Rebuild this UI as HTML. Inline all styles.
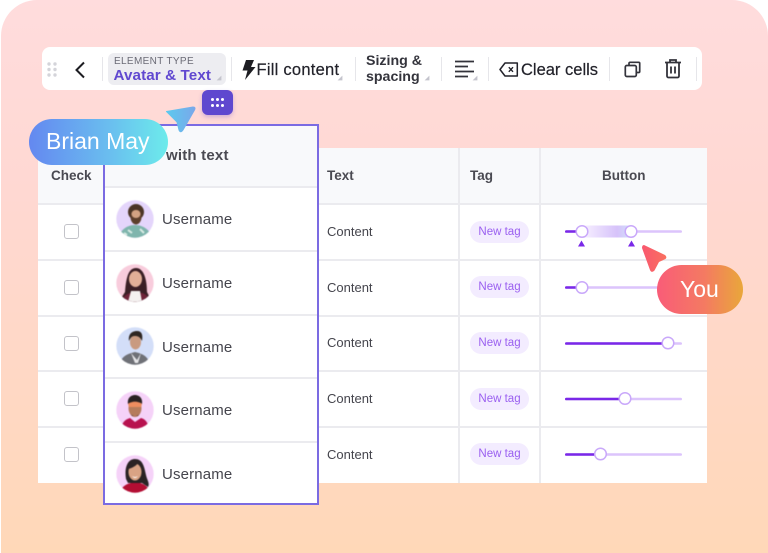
<!DOCTYPE html>
<html><head><meta charset="utf-8">
<style>
html,body{margin:0;padding:0;background:#fff;width:768px;height:553px;overflow:hidden}
#p{position:relative;width:768px;height:553px;overflow:hidden;background:#fff;font-family:"Liberation Sans",sans-serif}
#p div,#p span,#p svg{position:absolute;box-sizing:border-box}
.bg{left:1px;top:0;width:767px;height:553px;border-radius:36px 36px 0 0;background:linear-gradient(180deg,#ffdcdd 0%,#ffd8d2 35%,#ffd8b8 100%)}
.t{white-space:nowrap;line-height:1}
.hl{background:#ebebef}
.sep{width:1px;height:24px;top:57px;background:#e6e6ea}
.tri{width:0;height:0;border-left:6px solid transparent;border-bottom:6px solid #c4c4cd;transform:scale(.8)}
.u{left:162px;font-size:15px;color:#45454d;letter-spacing:.15px}
.c{left:327px;font-size:13px;color:#45454d}
.g{left:470px;width:59px;height:22px;border-radius:11px;background:#f3ecff;color:#9a5ff0;font-size:11.5px;line-height:23px;text-align:center}
.h{top:169px;font-size:13.5px;font-weight:700;color:#4a4a52}
.b{left:64px;width:15px;height:15px;border:1.5px solid #c3c3c9;border-radius:3px;background:#fff}
.av{filter:blur(.45px)}
</style></head><body>
<div id="p">
<div class="bg"></div>

<!-- Table -->
<div style="left:38px;top:148px;width:669px;height:335px;background:#fff"></div>
<div style="left:38px;top:148px;width:669px;height:56px;background:#f8f9fb"></div>
<div class="hl" style="left:38px;top:203px;width:669px;height:2px"></div>
<div class="hl" style="left:38px;top:259px;width:669px;height:2px"></div>
<div class="hl" style="left:38px;top:315px;width:669px;height:2px"></div>
<div class="hl" style="left:38px;top:370px;width:669px;height:2px"></div>
<div class="hl" style="left:38px;top:426px;width:669px;height:2px"></div>
<div class="hl" style="left:458px;top:148px;width:2px;height:335px"></div>
<div class="hl" style="left:539px;top:148px;width:2px;height:335px"></div>
<div class="t h" style="left:51px">Check</div>
<div class="t h" style="left:327px">Text</div>
<div class="t h" style="left:470px">Tag</div>
<div class="t h" style="left:602px">Button</div>

<div class="b" style="top:224px"></div>
<div class="b" style="top:280px"></div>
<div class="b" style="top:336px"></div>
<div class="b" style="top:391px"></div>
<div class="b" style="top:447px"></div>

<div class="t c" style="top:225px">Content</div>
<div class="t c" style="top:281px">Content</div>
<div class="t c" style="top:336px">Content</div>
<div class="t c" style="top:392px">Content</div>
<div class="t c" style="top:448px">Content</div>

<div class="t g" style="top:221px">New tag</div>
<div class="t g" style="top:276px">New tag</div>
<div class="t g" style="top:332px">New tag</div>
<div class="t g" style="top:388px">New tag</div>
<div class="t g" style="top:443px">New tag</div>

<!-- Sliders -->
<svg style="left:540px;top:204px" width="167" height="279" viewBox="0 0 167 279">
<defs><linearGradient id="tr" x1="0" x2="1"><stop offset="0" stop-color="#f5edff"/><stop offset=".7" stop-color="#d6c2fa"/><stop offset="1" stop-color="#cfe0fb"/></linearGradient></defs>
<g stroke-linecap="round" stroke-width="2.6">
<path d="M26.300 27.500H140.700" stroke="#dcc4fc"/><path d="M26.300 27.500H38" stroke="#7a28e8"/>
<path d="M26.300 83.500H140.700" stroke="#dcc4fc"/><path d="M26.300 83.500H40" stroke="#7a28e8"/>
<path d="M26.300 139.500H140.700" stroke="#dcc4fc"/><path d="M26.300 139.500H128" stroke="#7a28e8"/>
<path d="M26.300 195H140.700" stroke="#dcc4fc"/><path d="M26.300 195H85" stroke="#7a28e8"/>
<path d="M26.300 250.500H140.700" stroke="#dcc4fc"/><path d="M26.300 250.500H60" stroke="#7a28e8"/>
</g>
<rect x="45" y="21.500" width="46" height="12" fill="url(#tr)"/>
<g fill="#fff" stroke="#c9a8fa" stroke-width="1.500">
<circle cx="42" cy="27.500" r="5.800"/><circle cx="91" cy="27.500" r="5.800"/>
<circle cx="42" cy="83.500" r="5.800"/><circle cx="128" cy="139" r="5.800"/>
<circle cx="85" cy="194.500" r="5.800"/><circle cx="60.500" cy="250" r="5.800"/>
</g>
<path d="M41.500 36.500L45 42.500H38ZM91.500 36.500L95 42.500H88Z" fill="#7a28e8"/>
</svg>

<!-- Selected column -->
<div style="left:103px;top:124px;width:216px;height:381px;background:#fff;border:2px solid #7b6be2"></div>
<div style="left:105px;top:126px;width:212px;height:60px;background:#f8f9fb"></div>
<div class="hl" style="left:105px;top:186px;width:212px;height:2px"></div>
<div class="hl" style="left:105px;top:250px;width:212px;height:2px"></div>
<div class="hl" style="left:105px;top:314px;width:212px;height:2px"></div>
<div class="hl" style="left:105px;top:377px;width:212px;height:2px"></div>
<div class="hl" style="left:105px;top:441px;width:212px;height:2px"></div>
<div class="t" style="left:166px;top:148px;font-size:15px;font-weight:700;color:#4a4a52;letter-spacing:.2px">with text</div>
<div class="t u" style="top:212px">Username</div>
<div class="t u" style="top:276px">Username</div>
<div class="t u" style="top:340px">Username</div>
<div class="t u" style="top:403px">Username</div>
<div class="t u" style="top:467px">Username</div>

<!-- Avatars -->
<svg class="av" style="left:116px;top:200px" width="38" height="38" viewBox="0 0 38 38"><defs><clipPath id="c1"><circle cx="19" cy="19" r="18.700"/></clipPath></defs><g clip-path="url(#c1)"><rect width="38" height="38" fill="#e4d5fb"/><path d="M3 38C4 29 12 25 19 25S34 29 36 38Z" fill="#7fb5ad"/><path d="M12 30l4 3M24 29l4 4M8 33l3 2" stroke="#d9ebe4" stroke-width="2"/><circle cx="20" cy="12" r="8" fill="#4b3526"/><ellipse cx="20" cy="17" rx="5.500" ry="7.500" fill="#5d3f2c"/><ellipse cx="20" cy="14" rx="4.500" ry="4" fill="#d3a283"/></g></svg>
<svg class="av" style="left:116px;top:264px" width="38" height="38" viewBox="0 0 38 38"><defs><clipPath id="c2"><circle cx="19" cy="19" r="18.700"/></clipPath></defs><g clip-path="url(#c2)"><rect width="38" height="38" fill="#f8ccdc"/><path d="M4 36L9 28C10 15 12 4 20 4S31 16 31 28L35 36L30 38H8Z" fill="#3b1f25"/><path d="M5 38C7 32 11 30 14 29L26 29C29 30 33 32 34 38Z" fill="#6e2338"/><path d="M12 38L15 27H24L26 38Z" fill="#f4f1f0"/><ellipse cx="19.500" cy="15" rx="6.500" ry="8" fill="#e2af97"/></g></svg>
<svg class="av" style="left:116px;top:327px" width="38" height="38" viewBox="0 0 38 38"><defs><clipPath id="c3"><circle cx="19" cy="19" r="18.700"/></clipPath></defs><g clip-path="url(#c3)"><rect width="38" height="38" fill="#d3def8"/><path d="M4 38C5 29 11 27 19 25C27 27 32 29 34 38Z" fill="#6f7177"/><path d="M15 26L21 33L25 26L22 36H19Z" fill="#e6e6e8"/><ellipse cx="19.500" cy="15" rx="5.500" ry="7.500" fill="#c99a80"/><path d="M13 14C12 7 16 4 21 4S27 8 26 14C24 10 22 9 19 9S15 10 13 14Z" fill="#2e2622"/></g></svg>
<svg class="av" style="left:116px;top:391px" width="38" height="38" viewBox="0 0 38 38"><defs><clipPath id="c4"><circle cx="19" cy="19" r="18.700"/></clipPath></defs><g clip-path="url(#c4)"><rect width="38" height="38" fill="#f5d2f8"/><path d="M5 38C6 30 11 28 14 27L19 31L25 27C29 28 32 31 33 38Z" fill="#b8124f"/><ellipse cx="19" cy="17" rx="6.500" ry="9" fill="#b57c5c"/><path d="M12 13C11 7 15 4 19 4S27 7 26 13C22 10 16 10 12 13Z" fill="#2a2222"/><path d="M12 13C15 10 23 10 26 13L25 16H13Z" fill="#ee8d5f"/><path d="M14 22C16 26 22 26 24 22L22 25H16Z" fill="#3a2c28"/></g></svg>
<svg class="av" style="left:116px;top:455px" width="38" height="38" viewBox="0 0 38 38"><defs><clipPath id="c5"><circle cx="19" cy="19" r="18.700"/></clipPath></defs><g clip-path="url(#c5)"><rect width="38" height="38" fill="#f5d2f8"/><path d="M10 24C8 12 12 4 19 4S28 10 30 20C31 25 34 28 32 32L26 28H12Z" fill="#2a2324"/><path d="M4 38C5 32 10 29 15 28H24C28 29 33 32 34 38Z" fill="#b30e33"/><ellipse cx="19" cy="17" rx="6.500" ry="8.500" fill="#d9a384"/><path d="M12 14C14 8 18 8 22 8C20 11 16 13 12 14Z" fill="#2a2324"/><path d="M16 21Q19 23 22 21Q19 25 16 21Z" fill="#fff"/></g></svg>

<!-- Toolbar -->
<div style="left:42px;top:47px;width:660px;height:43px;background:#fff;border-radius:8px"></div>
<svg style="left:47px;top:62px" width="11" height="15"><g fill="#d4d4da"><circle cx="2" cy="2" r="1.700"/><circle cx="8" cy="2" r="1.700"/><circle cx="2" cy="7.500" r="1.700"/><circle cx="8" cy="7.500" r="1.700"/><circle cx="2" cy="13" r="1.700"/><circle cx="8" cy="13" r="1.700"/></g></svg>
<svg style="left:73px;top:60px" width="14" height="20"><path d="M11 2.500L3.500 10L11 17.500" fill="none" stroke="#1d1d22" stroke-width="2"/></svg>
<div class="sep" style="left:102px"></div>
<div style="left:108px;top:53px;width:118px;height:32px;background:#ededf1;border-radius:6px"></div>
<div class="t" style="left:114px;top:57px;font-size:10px;color:#6b6b76;letter-spacing:.35px">ELEMENT TYPE</div>
<div class="t" style="left:113.500px;top:68px;font-size:15.200px;font-weight:700;color:#6048d0;letter-spacing:.1px">Avatar &amp; Text</div>
<div class="tri" style="left:216px;top:75px"></div>
<div class="sep" style="left:231px"></div>
<svg style="left:241px;top:59px" width="15" height="22" viewBox="0 0 15 22"><path d="M5 1H13L10 8H14.500L4 21L6.500 11.500H1.500Z" fill="#1d1d22"/></svg>
<div class="t" style="left:256.500px;top:61.500px;font-size:16.500px;color:#22222a;letter-spacing:.25px;-webkit-text-stroke:.2px #22222a">Fill content</div>
<div class="tri" style="left:337px;top:75px"></div>
<div class="sep" style="left:355px"></div>
<div class="t" style="left:366px;top:54px;font-size:14.200px;font-weight:700;color:#34343c">Sizing &amp;</div>
<div class="t" style="left:366px;top:70px;font-size:14.200px;font-weight:700;color:#34343c">spacing</div>
<div class="tri" style="left:424px;top:75px"></div>
<div class="sep" style="left:441px"></div>
<svg style="left:455px;top:60px" width="20" height="18"><path d="M0 2H19M0 7H13M0 12H19M0 17H13" stroke="#33333b" stroke-width="1.800" fill="none" transform="translate(0,-.5)"/></svg>
<div class="tri" style="left:472px;top:75px"></div>
<div class="sep" style="left:488px"></div>
<svg style="left:499px;top:61px" width="20" height="17" viewBox="0 0 20 17"><path d="M6 2H18.300V15H6L1 8.500Z" fill="none" stroke="#22222a" stroke-width="1.500" stroke-linejoin="round"/><path d="M9.800 6.200L14 10.800M14 6.200L9.800 10.800" stroke="#22222a" stroke-width="1.400"/></svg>
<div class="t" style="left:521px;top:61.500px;font-size:16.500px;color:#22222a;-webkit-text-stroke:.2px #22222a">Clear cells</div>
<div class="sep" style="left:609px"></div>
<svg style="left:624px;top:61px" width="17" height="17" viewBox="0 0 17 17"><path d="M5 4V2.300A1 1 0 0 1 6 1.300H14.700A1 1 0 0 1 15.700 2.300V10.500A1 1 0 0 1 14.700 11.500H12.500" fill="none" stroke="#33333b" stroke-width="1.700"/><rect x="1.300" y="4.500" width="11" height="11" rx="1.500" fill="none" stroke="#33333b" stroke-width="1.700"/></svg>
<svg style="left:664px;top:58px" width="18" height="21" viewBox="0 0 18 21"><path d="M1 4.500H17M6 4.500V2H12V4.500M3 4.500V18A1.500 1.500 0 0 0 4.500 19.500H13.500A1.500 1.500 0 0 0 15 18V4.500M7 8.500V15.500M11 8.500V15.500" fill="none" stroke="#33333b" stroke-width="1.800"/></svg>
<div class="sep" style="left:696px"></div>

<!-- Drag handle -->
<div style="left:202px;top:90px;width:31px;height:25px;background:#5f48cf;border-radius:6px;box-shadow:0 2px 4px rgba(95,72,207,.3)"></div>
<svg style="left:210px;top:97px" width="15" height="11"><g fill="#fff"><circle cx="2.500" cy="2.500" r="1.500"/><circle cx="7.500" cy="2.500" r="1.500"/><circle cx="12.500" cy="2.500" r="1.500"/><circle cx="2.500" cy="8.500" r="1.500"/><circle cx="7.500" cy="8.500" r="1.500"/><circle cx="12.500" cy="8.500" r="1.500"/></g></svg>

<!-- Brian May cursor -->
<svg style="left:160px;top:100px" width="40" height="36" viewBox="0 0 40 36"><defs><linearGradient id="gb" x1="0" x2="1"><stop offset="0" stop-color="#5cc9ee"/><stop offset="1" stop-color="#7aa8ea"/></linearGradient></defs><path d="M6.500 11.500L33 7Q36 7 34.500 10L23 30Q20.500 33.500 19 30L17 22Z" fill="url(#gb)" stroke="url(#gb)" stroke-linejoin="round"/></svg>
<div style="left:29px;top:119px;width:139px;height:46px;border-radius:23px;background:linear-gradient(90deg,#6488f0 0%,#6ac0ef 60%,#6cebeb 100%)"></div>
<div class="t" style="left:46px;top:130px;font-size:23px;color:#fff">Brian May</div>

<!-- You cursor -->
<svg style="left:638px;top:242px" width="32" height="34" viewBox="0 0 32 34"><defs><linearGradient id="gy" x1="0" x2="1"><stop offset="0" stop-color="#f9586f"/><stop offset="1" stop-color="#f9705f"/></linearGradient></defs><path d="M6 3L27 13Q29.500 15 27.500 17L21 20L16.500 28.500Q13.500 31.500 12 28L4 6Q4 3 6 3Z" fill="url(#gy)"/></svg>
<div style="left:657px;top:265px;width:86px;height:49px;border-radius:24.500px;background:linear-gradient(90deg,#f95c78 0%,#f47a62 55%,#e9a73a 100%)"></div>
<div class="t" style="left:680px;top:278px;font-size:23px;color:#fff">You</div>
</div>
</body></html>
